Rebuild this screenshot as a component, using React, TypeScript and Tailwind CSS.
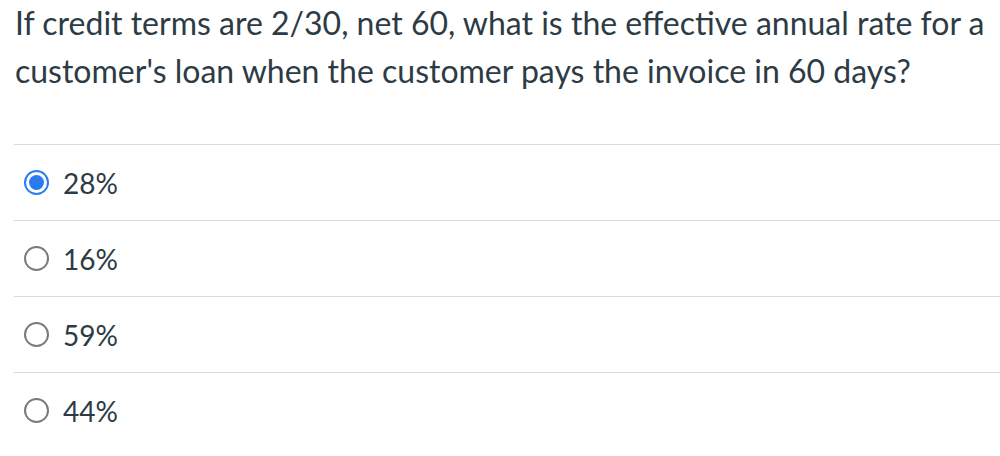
import React from "react"

const options = [
  { label: "28%", selected: true },
  { label: "16%", selected: false },
  { label: "59%", selected: false },
  { label: "44%", selected: false },
]

function Radio({ selected }: { selected: boolean }) {
  if (selected) {
    return (
      <span className="flex h-[25px] w-[25px] shrink-0 items-center justify-center rounded-full border-2 border-[#2b7bf0] bg-white">
        <span className="h-[15px] w-[15px] rounded-full bg-[#2b7bf0]" />
      </span>
    )
  }
  return <span className="h-[25px] w-[25px] shrink-0 rounded-full border-2 border-[#7a7a7a] bg-white" />
}

export default function App() {
  return (
    <div className="min-h-[456px] w-[1000px] bg-white pt-px text-[#2d3b45]" style={{ fontFamily: "Lato, 'Noto Sans', sans-serif" }}>
      <p className="-mt-[2px] px-[15px] text-[32px] leading-[48px]">
        If credit terms are 2/30, net 60, what is the effective annual rate for a customer's loan when the customer pays
        the invoice in 60 days?
      </p>
      <div className="mt-[49px] ml-[14px]">
        {options.map((o) => (
          <div key={o.label} className="flex h-[76px] items-center gap-[14px] border-t border-[#dcdcdc] pl-[10px]">
            <Radio selected={o.selected} />
            <span className="text-[28px]">{o.label}</span>
          </div>
        ))}
      </div>
    </div>
  )
}
